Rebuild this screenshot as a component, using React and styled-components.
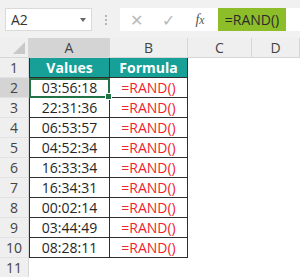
import React from "react";
import styled, { createGlobalStyle } from "styled-components";

const GlobalStyle = createGlobalStyle`
  body {
    margin: 0;
    background: #fff;
    font-family: "Open Sans", "Liberation Sans", sans-serif;
  }
`;

const Sheet = styled.div`
  width: 300px;
  height: 277px;
  overflow: hidden;
  background: #fff;
`;

const TopBar = styled.div`
  height: 38px;
  box-sizing: border-box;
  padding: 8px 0 0 5px;
  background: #f1f1f1;
  display: flex;
  align-items: flex-start;
`;

const NameBox = styled.div`
  width: 87px;
  height: 23px;
  box-sizing: border-box;
  border: 1px solid #dadada;
  background: #fff;
  display: flex;
  align-items: center;
  justify-content: space-between;
  padding: 0 5px 0 5px;
  font-size: 14px;
  color: #333;
`;

const Caret = styled.span`
  width: 0;
  height: 0;
  border-left: 3px solid transparent;
  border-right: 3px solid transparent;
  border-top: 4px solid #666;
`;

const Dots = styled.div`
  width: 28px;
  height: 23px;
  display: flex;
  flex-direction: column;
  align-items: center;
  justify-content: center;
  gap: 2px;
  span {
    width: 2px;
    height: 2px;
    background: #b5b5b5;
  }
`;

const FormulaBar = styled.div`
  flex: 1;
  height: 23px;
  background: #fff;
  display: flex;
  align-items: center;
`;

const BarIcon = styled.span`
  width: 32px;
  text-align: center;
  color: ${(p) => p.$color || "#b9b9b9"};
  font-size: ${(p) => p.$size || 15}px;
  font-style: ${(p) => (p.$italic ? "italic" : "normal")};
  font-family: ${(p) => (p.$italic ? '"Liberation Serif", serif' : "inherit")};
`;

const FormulaText = styled.div`
  width: 68px;
  height: 23px;
  margin-left: 2px;
  background: #8dbe2a;
  color: #2a2a2a;
  font-size: 14px;
  display: flex;
  align-items: center;
  justify-content: center;
`;

const Grid = styled.div`
  display: grid;
  grid-template-columns: 29px 81px 78px 64px 48px;
  grid-template-rows: 20px repeat(11, 20px);
`;

const Corner = styled.div`
  background: #efefef;
  border-right: 1px solid #d6d6d6;
  border-bottom: 1px solid #d6d6d6;
  box-sizing: border-box;
  position: relative;
  &::after {
    content: "";
    position: absolute;
    right: 3px;
    bottom: 3px;
    border-left: 12px solid transparent;
    border-bottom: 12px solid #c8c8c8;
  }
`;

const ColHead = styled.div`
  box-sizing: border-box;
  background: ${(p) => (p.$active ? "#d4d4d4" : "#efefef")};
  border-right: 1px solid #d6d6d6;
  border-bottom: 1px solid #d6d6d6;
  display: flex;
  align-items: center;
  justify-content: center;
  font-size: 14px;
  color: #444;
`;

const RowHead = styled.div`
  box-sizing: border-box;
  background: ${(p) => (p.$active ? "#d4d4d4" : "#efefef")};
  border-right: 1px solid #d6d6d6;
  border-bottom: 1px solid #e2e2e2;
  display: flex;
  align-items: center;
  justify-content: center;
  font-size: 14px;
  color: #444;
`;

const Cell = styled.div`
  box-sizing: border-box;
  display: flex;
  align-items: center;
  justify-content: center;
  font-size: 14px;
`;

const TableCell = styled(Cell)`
  position: relative;
  color: ${(p) => (p.$formula ? "#f0232a" : "#262626")};
  border-right: 1px solid #2e2e2e;
  border-bottom: 1px solid #2e2e2e;
  border-left: ${(p) => (p.$first ? "1px solid #2e2e2e" : "none")};
  ${(p) =>
    p.$selected &&
    `
    outline: 2px solid #217346;
    outline-offset: -2px;
    z-index: 1;
    &::after {
      content: "";
      position: absolute;
      right: -3px;
      bottom: -3px;
      width: 5px;
      height: 5px;
      background: #217346;
      border: 1px solid #fff;
    }
  `}
`;

const HeadCell = styled(Cell)`
  background: #17a097;
  color: #fff;
  font-weight: 700;
  border-right: 1px solid #2e2e2e;
  border-bottom: 1px solid #2e2e2e;
  border-left: ${(p) => (p.$first ? "1px solid #2e2e2e" : "none")};
`;

const values = [
  "03:56:18",
  "22:31:36",
  "06:53:57",
  "04:52:34",
  "16:33:34",
  "16:34:31",
  "00:02:14",
  "03:44:49",
  "08:28:11",
];

export default function App() {
  return (
    <Sheet>
      <GlobalStyle />
      <TopBar>
        <NameBox>
          A2
          <Caret />
        </NameBox>
        <Dots>
          <span />
          <span />
          <span />
        </Dots>
        <FormulaBar>
          <BarIcon $size={16}>✕</BarIcon>
          <BarIcon $size={16}>✓</BarIcon>
          <BarIcon $italic $color="#555" $size={14}>
            f<small>x</small>
          </BarIcon>
          <FormulaText>=RAND()</FormulaText>
        </FormulaBar>
      </TopBar>
      <Grid>
        <Corner />
        <ColHead $active>A</ColHead>
        <ColHead>B</ColHead>
        <ColHead>C</ColHead>
        <ColHead>D</ColHead>

        <RowHead>1</RowHead>
        <HeadCell $first>Values</HeadCell>
        <HeadCell>Formula</HeadCell>
        <Cell />
        <Cell />

        {values.map((v, i) => (
          <React.Fragment key={i}>
            <RowHead $active={i === 0}>{i + 2}</RowHead>
            <TableCell $first $selected={i === 0}>
              {v}
            </TableCell>
            <TableCell $formula>=RAND()</TableCell>
            <Cell />
            <Cell />
          </React.Fragment>
        ))}

        <RowHead>11</RowHead>
        <Cell />
        <Cell />
        <Cell />
        <Cell />
      </Grid>
    </Sheet>
  );
}
